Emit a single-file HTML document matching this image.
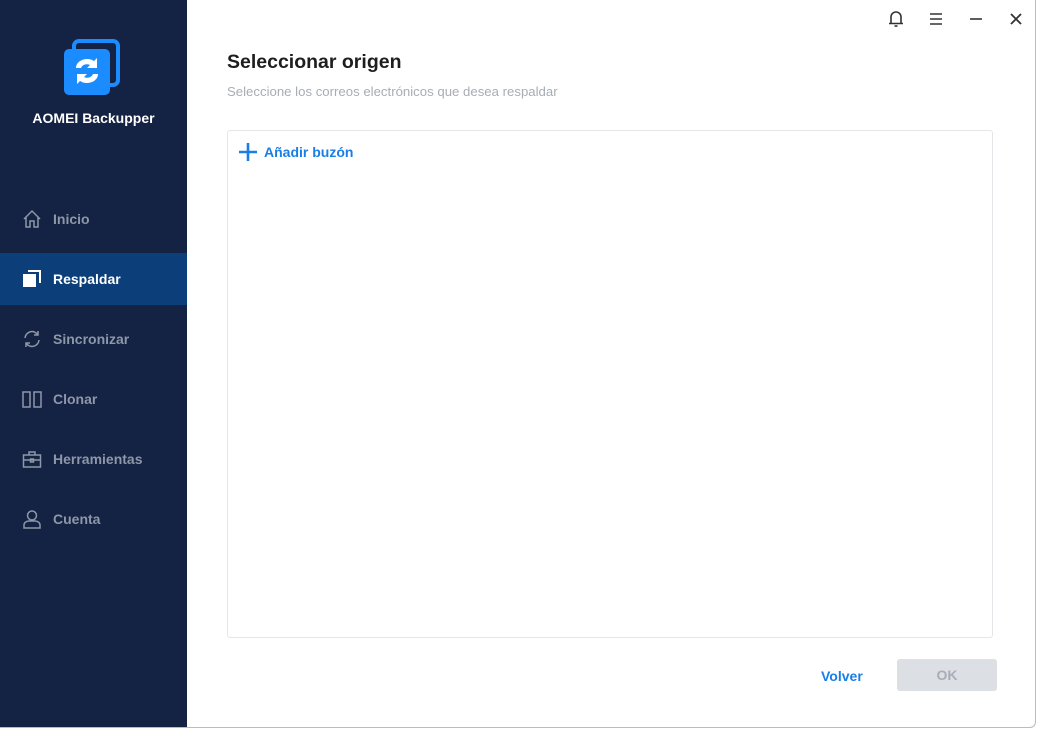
<!DOCTYPE html>
<html><head><meta charset="utf-8"><style>
*{margin:0;padding:0;box-sizing:border-box}
body{width:1038px;height:729px;background:#fff;font-family:"Liberation Sans",sans-serif;position:relative;overflow:hidden}
.win{position:absolute;left:0;top:0;width:1036px;height:728px;background:#fff;border-right:1px solid #b8bcc4;border-bottom:1px solid #b8bcc4;border-bottom-right-radius:6px;overflow:hidden}
.side{position:absolute;left:0;top:0;width:187px;height:728px;background:#142243}
.brand{position:absolute;top:110px;left:0;width:187px;text-align:center;color:#fff;font-weight:bold;font-size:14px}
.nav{position:absolute;left:0;width:187px;height:52px;display:flex;align-items:center;color:#8e97a8;font-size:14px;font-weight:bold}
.nav svg{position:absolute;left:22px}
.nav span{position:absolute;left:53px}
.nav.act{background:#0c3f79;color:#fff}
h1{position:absolute;left:227px;top:51px;font-size:19.5px;color:#1e1e1e;font-weight:bold}
.sub{position:absolute;left:227px;top:84px;font-size:13.2px;color:#a8adb5}
.box{position:absolute;left:227px;top:130px;width:766px;height:508px;border:1px solid #e4e6ea;border-radius:3px}
.add{position:absolute;left:238px;top:142px;color:#1a7ee6;font-weight:bold;font-size:14px;display:flex;align-items:center}
.volver{position:absolute;left:821px;top:668px;color:#1a7ee6;font-weight:bold;font-size:14px}
.ok{position:absolute;left:897px;top:659px;width:100px;height:32px;background:#dcdfe4;border-radius:3px;color:#a9aeb6;font-weight:bold;font-size:14px;text-align:center;line-height:32px}
</style></head><body><div class="win">
<div class="side">
<svg style="position:absolute;left:63px;top:38px" width="58" height="58" viewBox="0 0 58 58">
<rect x="11" y="3" width="44" height="44" rx="5" fill="none" stroke="#1a8cff" stroke-width="4"/>
<rect x="1" y="11" width="46" height="46" rx="5" fill="#1a8cff"/>
<path d="M13 30 a11 9 0 0 1 18 -7 l3 -3 v10 h-10 l3 -3 a6 5 0 0 0 -9 3z" fill="#fff"/>
<path d="M35 36 a11 9 0 0 1 -18 7 l-3 3 v-10 h10 l-3 3 a6 5 0 0 0 9 -3z" fill="#fff"/>
</svg>
<div class="brand">AOMEI Backupper</div>
<div class="nav" style="top:193px"><svg width="20" height="20" viewBox="0 0 20 20" fill="none" stroke="#8e97a8" stroke-width="1.5"><path d="M2 10 L10 2 L18 10 M4 8 V18 H8 V12 H12 V18 H16 V8"/></svg><span>Inicio</span></div>
<div class="nav act" style="top:253px"><svg width="20" height="20" viewBox="0 0 20 20"><rect x="1" y="5" width="13" height="13" fill="#fff"/><path d="M6 2 H18 V14" fill="none" stroke="#fff" stroke-width="2"/></svg><span>Respaldar</span></div>
<div class="nav" style="top:313px"><svg width="20" height="20" viewBox="0 0 20 20" fill="none" stroke="#8e97a8" stroke-width="1.5"><path d="M3 9 A7 7 0 0 1 16 6 M17 11 A7 7 0 0 1 4 14 M16 2 V6 H12 M4 18 V14 H8"/></svg><span>Sincronizar</span></div>
<div class="nav" style="top:373px"><svg width="20" height="20" viewBox="0 0 20 20" fill="none" stroke="#8e97a8" stroke-width="1.5"><rect x="1" y="3" width="7" height="15"/><rect x="12" y="3" width="7" height="15"/></svg><span>Clonar</span></div>
<div class="nav" style="top:433px"><svg width="20" height="20" viewBox="0 0 20 20" fill="none" stroke="#8e97a8" stroke-width="1.5"><rect x="1.5" y="6" width="17" height="12"/><path d="M7 6 V3 H13 V6 M1.5 11 H18.5"/><rect x="8.5" y="10" width="3" height="3"/></svg><span>Herramientas</span></div>
<div class="nav" style="top:493px"><svg width="20" height="20" viewBox="0 0 20 20" fill="none" stroke="#8e97a8" stroke-width="1.5"><circle cx="10" cy="6.5" r="4.5"/><path d="M2 19 V16 A5 4 0 0 1 7 12 H13 A5 4 0 0 1 18 16 V19 Z"/></svg><span>Cuenta</span></div>
</div>
<svg style="position:absolute;left:888px;top:10px" width="16" height="18" viewBox="0 0 16 18" fill="none" stroke="#333" stroke-width="1.6"><path d="M3 13 V7 A5 5 0 0 1 13 7 V13 M1 13.5 H15"/><path d="M6.5 16 H9.5"/></svg>
<svg style="position:absolute;left:929px;top:12px" width="14" height="14" viewBox="0 0 14 14" stroke="#333" stroke-width="1.6"><path d="M1 2 H13 M1 7 H13 M1 12 H13"/></svg>
<svg style="position:absolute;left:969px;top:12px" width="14" height="14" viewBox="0 0 14 14" stroke="#333" stroke-width="1.6"><path d="M1 7 H13"/></svg>
<svg style="position:absolute;left:1009px;top:12px" width="14" height="14" viewBox="0 0 14 14" stroke="#333" stroke-width="1.8"><path d="M2 2 L12 12 M12 2 L2 12"/></svg>
<h1>Seleccionar origen</h1>
<div class="sub">Seleccione los correos electrónicos que desea respaldar</div>
<div class="box"></div>
<div class="add"><svg width="20" height="20" viewBox="0 0 20 20" stroke="#1a7ee6" stroke-width="2.6" style="margin-right:6px"><path d="M10 1 V19 M1 10 H19"/></svg>Añadir buzón</div>
<div class="volver">Volver</div>
<div class="ok">OK</div>
</div></body></html>
